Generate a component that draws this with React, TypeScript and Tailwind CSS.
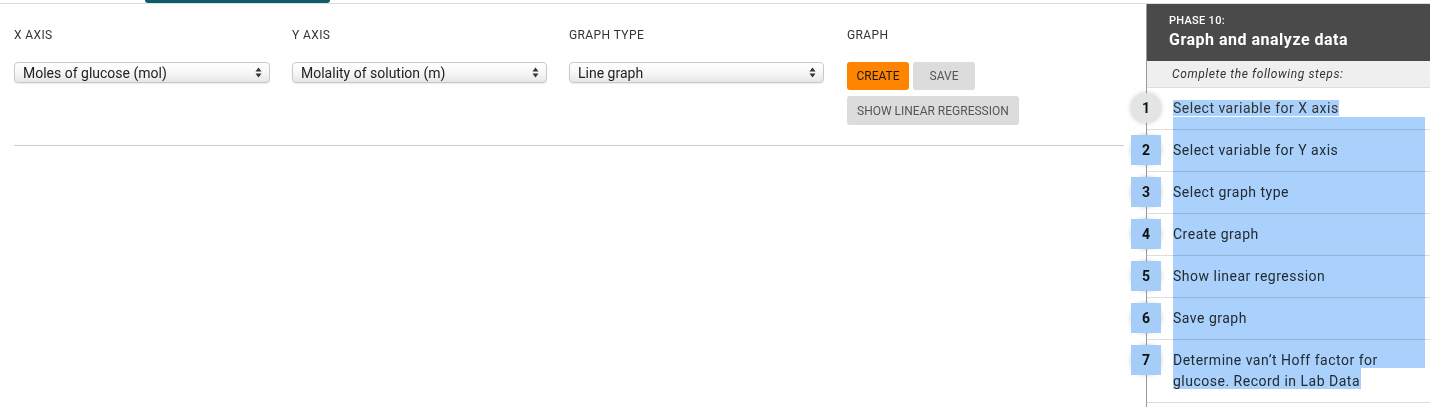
import React from "react";

function Select({ value, width }: { value: string; width: string }) {
  return (
    <div
      className={`${width} h-[21px] flex items-center justify-between rounded-[4px] border border-[#c9c9c9] bg-gradient-to-b from-[#ffffff] via-[#f7f7f7] to-[#e6e6e6] shadow-[0_1px_1px_rgba(0,0,0,0.08)] pl-[8px] pr-[7px]`}
    >
      <span className="text-[14px] leading-none text-[#222]">{value}</span>
      <svg width="7" height="11" viewBox="0 0 7 11">
        <path d="M3.5 0.5 L6.5 4.5 L0.5 4.5 Z" fill="#333" />
        <path d="M3.5 10.5 L6.5 6.5 L0.5 6.5 Z" fill="#333" />
      </svg>
    </div>
  );
}

const steps = [
  "Select variable for X axis",
  "Select variable for Y axis",
  "Select graph type",
  "Create graph",
  "Show linear regression",
  "Save graph",
];

function Num({ n, selected }: { n: number; selected: boolean }) {
  return (
    <div className="relative w-[30px] h-[30px] -ml-[16px] mt-[5px] shrink-0 flex items-center justify-center">
      <div className="absolute inset-0 rounded-full bg-[#e3e5e4] shadow-[0_0_5px_rgba(0,0,0,0.22)]" />
      {selected && <div className="absolute inset-0 bg-[#a6cdf7]" />}
      <span className="relative text-[14px] font-bold text-[#111]">{n}</span>
    </div>
  );
}

const label = "text-[12px] leading-[13px] tracking-[0.4px] text-[#333] mb-[20px]";
const btn = "h-[28px] rounded-[3px] text-[12px]";

export default function App() {
  return (
    <div
      className="w-[1430px] h-[407px] overflow-hidden bg-white flex flex-col"
      style={{ fontFamily: "Roboto, 'Liberation Sans', sans-serif" }}
    >
      <div className="h-[3px] shrink-0 flex">
        <div className="ml-[145px] w-[185px] h-[3px] bg-[#0c5c69] rounded-b-[3px]" />
      </div>
      <div className="h-px shrink-0 bg-[#dddddd]" />
      <div className="flex flex-1 min-h-0">
        {/* Left area */}
        <div className="w-[1146px] shrink-0 pl-[14px] pr-[22px] pt-[25px]">
          <div className="flex">
            <div className="w-[278px] flex flex-col">
              <div className={label}>X AXIS</div>
              <Select value="Moles of glucose (mol)" width="w-[256px]" />
            </div>
            <div className="w-[277px] flex flex-col">
              <div className={label}>Y AXIS</div>
              <Select value="Molality of solution (m)" width="w-[255px]" />
            </div>
            <div className="w-[278px] flex flex-col">
              <div className={label}>GRAPH TYPE</div>
              <Select value="Line graph" width="w-[255px]" />
            </div>
            <div className="flex flex-col">
              <div className={label}>GRAPH</div>
              <div className="flex gap-[4px]">
                <button className={`${btn} w-[62px] bg-[#ff8400] text-[#1a1a1a]`}>CREATE</button>
                <button className={`${btn} w-[62px] bg-[#dcdcdc] text-[#555]`}>SAVE</button>
              </div>
              <div className="mt-[6px]">
                <button className="h-[29px] px-[10px] rounded-[3px] bg-[#dcdcdc] text-[12px] text-[#555]">SHOW LINEAR REGRESSION</button>
              </div>
            </div>
          </div>
          <div className="mt-[20px] h-px bg-[#cccccc]" />
        </div>

        {/* Right panel */}
        <div className="relative flex-1 border-l border-[#9a9a9a] flex flex-col">
          <div className="h-[57px] bg-[#4a4a4a] pl-[22px] pt-[10px] text-white">
            <div className="text-[11px] leading-[13px] font-medium tracking-[0.3px]">PHASE 10:</div>
            <div className="text-[16px] leading-[22px] font-bold tracking-[0.5px] mt-[2px]">Graph and analyze data</div>
          </div>
          <div className="h-[27px] bg-[#efefef] border-b border-[#dddddd] pl-[25px] flex items-center">
            <span className="text-[12px] italic text-[#333] tracking-[0.6px]">Complete the following steps:</span>
          </div>
          {steps.map((s, i) => (
            <div key={i} className="flex items-start border-b border-[#dddddd]">
              <Num n={i + 1} selected={i > 0} />
              <div className="ml-[12px] py-[10px] text-[14px] leading-[21px] text-[#333] tracking-[0.5px]">
                {i === 0 ? <span className="bg-[#aad1fb]">{s}</span> : s}
              </div>
            </div>
          ))}
          <div className="flex items-start border-b border-[#dddddd]">
            <Num n={7} selected={true} />
            <div className="ml-[12px] py-[10px] text-[14px] leading-[21px] text-[#333] tracking-[0.5px]">
              Determine van’t Hoff factor for
              <br />
              glucose. Record in Lab Data
            </div>
          </div>

          {/* selection highlight overlay */}
          <div className="pointer-events-none absolute left-[26px] top-[113px] w-[252px] h-[251px] bg-[#aad1fb] mix-blend-multiply" />
          <div className="pointer-events-none absolute left-[26px] top-[364px] w-[188px] h-[21px] bg-[#aad1fb] mix-blend-multiply" />
        </div>
      </div>
    </div>
  );
}
